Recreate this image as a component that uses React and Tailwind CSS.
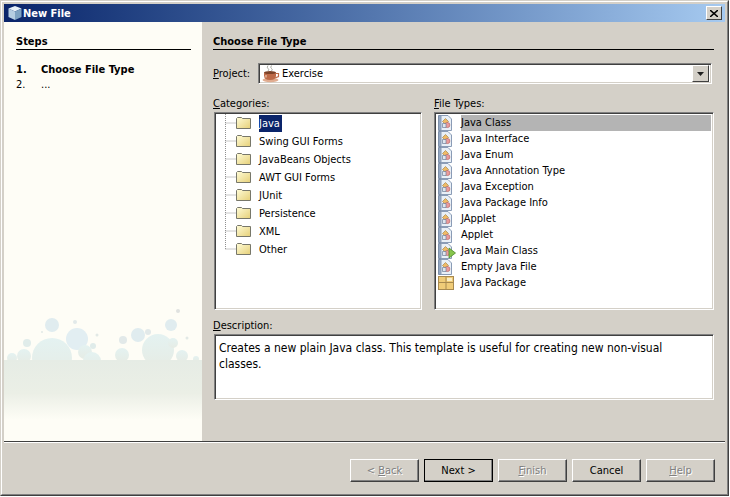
const font = "font-['DejaVu_Sans_Condensed','Liberation_Sans',sans-serif]";

const categories = ["Java", "Swing GUI Forms", "JavaBeans Objects", "AWT GUI Forms", "JUnit", "Persistence", "XML", "Other"];
const fileTypes = [
  { name: "Java Class", icon: "class" },
  { name: "Java Interface", icon: "class" },
  { name: "Java Enum", icon: "class" },
  { name: "Java Annotation Type", icon: "class" },
  { name: "Java Exception", icon: "class" },
  { name: "Java Package Info", icon: "class" },
  { name: "JApplet", icon: "class" },
  { name: "Applet", icon: "class" },
  { name: "Java Main Class", icon: "main" },
  { name: "Empty Java File", icon: "class" },
  { name: "Java Package", icon: "package" },
];

const sunken = "border border-t-[#808080] border-l-[#808080] border-b-white border-r-white shadow-[inset_1px_1px_0_#404040,inset_-1px_-1px_0_#d4d0c8]";

const CubeIcon = () => (
  <svg width="16" height="16" viewBox="0 0 16 16" className="shrink-0">
    <path d="M8 1 L14.5 3.5 L8 6.5 L1.5 3.5 Z" fill="#e8f1f8" />
    <path d="M1.5 3.5 L8 6.5 V15 L1.5 12 Z" fill="#b5cde2" />
    <path d="M14.5 3.5 L8 6.5 V15 L14.5 12 Z" fill="#7ea2c2" />
  </svg>
);

const CoffeeIcon = () => (
  <svg width="18" height="18" viewBox="0 0 18 18" className="shrink-0">
    <path d="M6 0.5 Q4.5 2.5 6 3.5 Q7.5 4.5 6 6 M9.5 0.5 Q8 2.5 9.5 3.5 Q11 4.5 9.5 6" fill="none" stroke="#a8a8a0" strokeWidth="1" />
    <ellipse cx="8.5" cy="15" rx="8" ry="2.2" fill="#e0ac90" />
    <path d="M2 7.5 H14 V10.5 Q14 15 8 15 Q2 15 2 10.5 Z" fill="#bd6a48" />
    <ellipse cx="8" cy="7.6" rx="6" ry="1.5" fill="#7c4228" />
    <path d="M14 8.5 H16.5 V11.5 L13 13" fill="none" stroke="#bd6a48" strokeWidth="1.2" />
    <path d="M4 10 V12.5" stroke="#eec8b0" strokeWidth="1.2" />
  </svg>
);

const FolderIcon = () => (
  <svg width="15" height="12" viewBox="0 0 15 12" className="shrink-0">
    <defs>
      <linearGradient id="folderFill" x1="0" y1="0" x2="1" y2="1">
        <stop offset="0" stopColor="#fffcd8" />
        <stop offset="1" stopColor="#e6d078" />
      </linearGradient>
    </defs>
    <path d="M0.5 11.5 V1.5 L1.5 0.5 H5.5 L6.5 1.5 H14.5 V11.5 Z" fill="url(#folderFill)" stroke="#77776a" strokeWidth="1" />
  </svg>
);

const ClassIcon = ({ main }) => (
  <svg width="18" height="16" viewBox="0 0 18 16" className="shrink-0">
    <path d="M0.5 0.5 H3.5 V15.5 H0.5 Z" fill="#94a8c4" stroke="#7d8fa8" strokeWidth="1" />
    <path d="M3 0.5 H10 L13.5 4 V15.5 H3 Z" fill="#e9f0f7" stroke="#8a9cb6" strokeWidth="1" />
    <path d="M7.5 3.5 L10.5 6.5 L7.5 9.5 L4.5 6.5 Z" fill="#eebb66" stroke="#9a7a3c" strokeWidth="0.6" />
    <circle cx="9.3" cy="10" r="2.6" fill="#eb9a9a" stroke="#b06060" strokeWidth="0.6" />
    <path d="M4.5 8.5 H8 V12.5 H4.5 Z" fill="#dfe6ee" stroke="#6d7f98" strokeWidth="0.7" />
    {main && <path d="M11 5 L17.5 10 L11 15 Z" fill="#86c44c" stroke="#4c8a28" strokeWidth="0.8" />}
  </svg>
);

const PackageIcon = () => (
  <svg width="16" height="16" viewBox="0 0 16 16" className="shrink-0">
    <rect x="0.5" y="1.5" width="15" height="13" fill="#f0cc78" stroke="#a88a50" />
    <path d="M0.5 7.5 H15.5 M8 1.5 V14.5" stroke="#a88a50" fill="none" />
    <rect x="9" y="3" width="5" height="3" fill="#fbeec4" />
  </svg>
);

const Label = ({ letter, rest, className = "" }) => (
  <div className={`text-[11px] leading-[13px] text-black ${className}`}>
    <u>{letter}</u>
    {rest}
  </div>
);

// classic raised button, `isDefault` gets the black outline
const WizardButton = ({ letter, before, after, label, disabled, isDefault }) => (
  <div
    className={`w-[69px] h-[23px] flex items-center justify-center text-[11px] ${
      isDefault ? "outline outline-1 -outline-offset-1 outline-black" : ""
    } border border-t-white border-l-white border-b-[#404040] border-r-[#404040] shadow-[inset_-1px_-1px_0_#808080] ${
      disabled ? "text-[#808080] [text-shadow:1px_1px_0_#fff]" : "text-black"
    }`}
  >
    {label || (
      <span>
        {before}
        <u>{letter}</u>
        {after}
      </span>
    )}
  </div>
);

const Splash = () => (
  <svg width="198" height="151" viewBox="0 0 198 151" className="absolute left-0 bottom-0">
    <defs>
      <linearGradient id="fade" x1="0" y1="0" x2="0" y2="1">
        <stop offset="0" stopColor="#e6ece5" />
        <stop offset="0.55" stopColor="#ebefe6" />
        <stop offset="1" stopColor="#fefdf6" />
      </linearGradient>
      <linearGradient id="blobs" x1="0" y1="0" x2="0" y2="1">
        <stop offset="0" stopColor="#e4f2f1" />
        <stop offset="1" stopColor="#e6ece5" />
      </linearGradient>
    </defs>
    <g fill="url(#blobs)">
      <circle cx="48" cy="68" r="20" />
      <circle cx="73" cy="49" r="11" fill="#e2eef2" />
      <circle cx="48" cy="35" r="7" fill="#e0ecef" />
      <circle cx="71" cy="32" r="2" fill="#e2e9e9" />
      <circle cx="23" cy="53" r="4" fill="#e0ecea" />
      <circle cx="89" cy="56" r="3" fill="#e0ecea" />
      <circle cx="81" cy="62" r="7" />
      <circle cx="88" cy="71" r="9" />
      <circle cx="118" cy="65" r="7" />
      <circle cx="119" cy="50" r="4" fill="#e2e9e9" />
      <circle cx="134" cy="45" r="7" fill="#e0ecef" />
      <circle cx="144" cy="42" r="3" fill="#e2e9e9" />
      <circle cx="167" cy="35" r="6" fill="#e0ecef" />
      <circle cx="174" cy="21" r="2" fill="#e0e2e0" />
      <circle cx="154" cy="60" r="16" />
      <circle cx="169" cy="53" r="5" />
      <circle cx="183" cy="48" r="1.5" fill="#e2e9e6" />
      <circle cx="93" cy="45" r="1.5" fill="#e2e9e6" />
      <circle cx="38" cy="42" r="1" fill="#e2e9e6" />
      <circle cx="8" cy="68" r="5" />
      <circle cx="20" cy="66" r="7" />
      <circle cx="178" cy="66" r="6" />
      <circle cx="192" cy="69" r="3" />
    </g>
    <rect x="0" y="70" width="198" height="60" fill="url(#fade)" />
  </svg>
);

export default function App() {
  return (
    <div className={`w-[729px] h-[496px] ${font} text-[11px] leading-[13px] bg-[#d4d0c8] border border-t-[#d4d0c8] border-l-[#d4d0c8] border-b-[#404040] border-r-[#404040]`}>
      <div className="h-full flex flex-col border border-t-white border-l-white border-b-[#808080] border-r-[#808080] p-[2px]">
        {/* title bar */}
        <div className="h-[18px] shrink-0 flex items-center pl-[3px] pr-[3px] bg-gradient-to-r from-[#0a246a] to-[#a6caf0]">
          <CubeIcon />
          <span className="text-white font-bold text-[11px] flex-1">New File</span>
          <div className="w-[16px] h-[14px] flex items-center justify-center bg-[#d4d0c8] border border-t-white border-l-white border-b-[#404040] border-r-[#404040]">
            <svg width="8" height="7" viewBox="0 0 8 7">
              <path d="M0 0 L8 7 M8 0 L0 7" stroke="#000" strokeWidth="1.5" />
            </svg>
          </div>
        </div>

        <div className="h-[419px] shrink-0 flex">
          {/* steps panel */}
          <div className="relative w-[198px] shrink-0 bg-[#fefdf6] pt-[13px] pl-[12px] pr-[11px]">
            <Splash />
            <div className="relative">
              <div className="font-bold text-black pb-[1px] border-b border-black h-[15px]">Steps</div>
              <div className="mt-[13px] flex font-bold h-[15px] text-black">
                <span className="w-[25px]">1.</span>
                <span>Choose File Type</span>
              </div>
              <div className="flex h-[16px] text-black">
                <span className="w-[25px]">2.</span>
                <span>...</span>
              </div>
            </div>
          </div>

          {/* right pane */}
          <div className="flex-1 pt-[13px] pl-[11px] pr-[11px] flex flex-col">
            <div className="font-bold text-black border-b border-black h-[15px]">Choose File Type</div>

            <div className="mt-[13px] flex items-center h-[21px]">
              <Label letter="P" rest="roject:" className="w-[45px]" />
              <div className={`w-[454px] h-[21px] bg-white flex items-center pl-[3px] pr-[2px] ${sunken}`}>
                <CoffeeIcon />
                <span className="ml-[2px] flex-1">Exercise</span>
                <div className="w-[17px] h-[17px] flex items-center justify-center bg-[#d4d0c8] border border-t-white border-l-white border-b-[#404040] border-r-[#404040]">
                  <svg width="7" height="4" viewBox="0 0 7 4">
                    <path d="M0 0 H7 L3.5 4 Z" fill="#202020" />
                  </svg>
                </div>
              </div>
            </div>

            <div className="mt-[13px] flex gap-[12px]">
              <div className="w-[208px] ml-[1px]">
                <Label letter="C" rest="ategories:" className="-ml-[1px] h-[15px]" />
                <div className={`h-[198px] bg-white pt-[1px] pl-[2px] ${sunken}`}>
                  {categories.map((c, i) => (
                    <div key={c} className="h-[18px] flex items-center">
                      <svg width="18" height="18" viewBox="0 0 18 18" className="shrink-0 ml-[1px]">
                        <path
                          d={i === categories.length - 1 ? "M7.5 0 V9 M7.5 9 H18" : "M7.5 0 V18 M7.5 9 H18"}
                          stroke="#909090"
                          strokeDasharray="1 1"
                          fill="none"
                        />
                      </svg>
                      <FolderIcon />
                      <span
                        className={`ml-[8px] h-[17px] leading-[17px] pr-[2px] ${i === 0 ? "bg-[#0a246a] text-white" : "text-black"}`}
                      >
                        {c}
                      </span>
                    </div>
                  ))}
                </div>
              </div>

              <div className="w-[280px]">
                <Label letter="F" rest="ile Types:" className="h-[15px]" />
                <div className={`h-[198px] bg-white pt-[2px] pl-[2px] pr-[2px] ${sunken}`}>
                  {fileTypes.map((t, i) => (
                    <div key={t.name} className="h-[16px] flex items-center">
                      <span className="w-[24px] shrink-0 flex items-center pl-[1px]">
                        {t.icon === "package" ? <PackageIcon /> : <ClassIcon main={t.icon === "main"} />}
                      </span>
                      <span className={`flex-1 h-[16px] leading-[16px] text-black ${i === 0 ? "bg-[#b4b4b4]" : ""}`}>
                        {t.name}
                      </span>
                    </div>
                  ))}
                </div>
              </div>
            </div>

            <Label letter="D" rest="escription:" className="mt-[9px] h-[15px]" />
            <div className={`ml-[1px] w-[500px] h-[66px] bg-white pt-[5px] pl-[4px] pr-[6px] text-[12px] leading-[16px] text-black ${sunken}`}>
              Creates a new plain Java class. This template is useful for creating new non-visual classes.
            </div>
          </div>
        </div>

        {/* footer */}
        <div className="flex-1 border-t border-t-[#404040] shadow-[inset_0_1px_0_#fff]">
          <div className="flex justify-end gap-[5px] pt-[17px] pr-[10px]">
            <WizardButton before="< " letter="B" after="ack" disabled />
            <WizardButton label="Next >" isDefault />
            <WizardButton letter="F" after="inish" disabled />
            <WizardButton label="Cancel" />
            <WizardButton letter="H" after="elp" disabled />
          </div>
        </div>
      </div>
    </div>
  );
}
